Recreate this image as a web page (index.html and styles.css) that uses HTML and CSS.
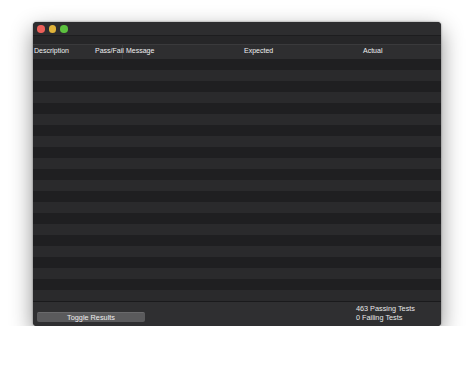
FILE: index.html
```html
<!DOCTYPE html>
<html lang="en">
<head>
    <meta charset="UTF-8">
    <title>Test Results</title>
    <link rel="stylesheet" href="styles.css">
</head>
<body>
    <div class="window">
        <div class="titlebar">
            <span class="light red"></span>
            <span class="light yellow"></span>
            <span class="light green"></span>
        </div>
        <div class="toolbar"></div>

        <!-- Results table -->
        <div class="table-head">
            <div class="col col-desc">Description</div>
            <div class="col col-pass">Pass/Fail</div>
            <div class="col col-msg">Message</div>
            <div class="col col-exp">Expected</div>
            <div class="col col-act">Actual</div>
        </div>
        <div class="table-body" id="rows"></div>

        <div class="footer">
            <button class="toggle">Toggle Results</button>
            <div class="summary">
                <div>463 Passing Tests</div>
                <div>0 Failing Tests</div>
            </div>
        </div>
    </div>

    <script>
        const rows = document.getElementById("rows");
        for (let i = 0; i < 22; i++) {
            const row = document.createElement("div");
            row.className = "row";
            rows.appendChild(row);
        }
    </script>
</body>
</html>
```

FILE: styles.css
```css
body {
    margin: 0;
    background: #ffffff;
    font-family: "Liberation Sans", Arial, sans-serif;
    color: #e8e8e8;
}

.window {
    margin: 22px 0 0 33px;
    width: 408px;
    height: 304px;
    background-color: #2c2c2e;
    border-radius: 4px;
    overflow: hidden;
    display: flex;
    flex-direction: column;
    box-shadow: 0 8px 22px rgba(0, 0, 0, 0.45), 0 0 2px rgba(0, 0, 0, 0.5);
}

.titlebar {
    height: 12px;
    display: flex;
    align-items: center;
    gap: 4px;
    padding: 1px 0 0 4px;
    background-color: #2d2d2f;
}

.light {
    width: 7.5px;
    height: 7.5px;
    border-radius: 50%;
}

.red { background-color: #ec5f59; }
.yellow { background-color: #e0b33a; }
.green { background-color: #5cc13f; }

.toolbar {
    height: 8px;
    background-color: #262628;
    border-top: 1px solid #1d1d1f;
}

.table-head {
    height: 14px;
    display: flex;
    align-items: center;
    background-color: #2e2e30;
    border-top: 1px solid #3a3a3c;
    font-size: 7px;
    line-height: 12px;
    color: #f0f0f0;
}

.col {
    padding-left: 1px;
    padding-bottom: 2px;
    white-space: nowrap;
}

.col-desc { width: 60px; }
.col-pass { width: 27px; border-right: 1px solid #3c3c3e; }
.col-msg { width: 117px; padding-left: 3px; }
.col-exp { width: 118px; }
.col-act { flex: 1; }

.table-body {
    height: 242px;
    overflow: hidden;
}

.row {
    height: 11px;
    background-color: #1f1f21;
}

.row:nth-child(even) {
    background-color: #2a2a2c;
}

.footer {
    flex: 1;
    display: flex;
    justify-content: space-between;
    align-items: flex-start;
    background-color: #2f2f31;
    border-top: 1px solid #1a1a1c;
    padding: 2px 26px 0 4px;
}

.toggle {
    margin-top: 8px;
    width: 108px;
    height: 10px;
    padding: 0;
    background-color: #5a5a5c;
    border: none;
    border-top: 1px solid #6a6a6c;
    border-radius: 2px;
    color: #eeeeee;
    font-family: "Liberation Sans", Arial, sans-serif;
    font-size: 7.3px;
    line-height: 9px;
}

.summary {
    font-size: 7.3px;
    line-height: 9px;
}
```
